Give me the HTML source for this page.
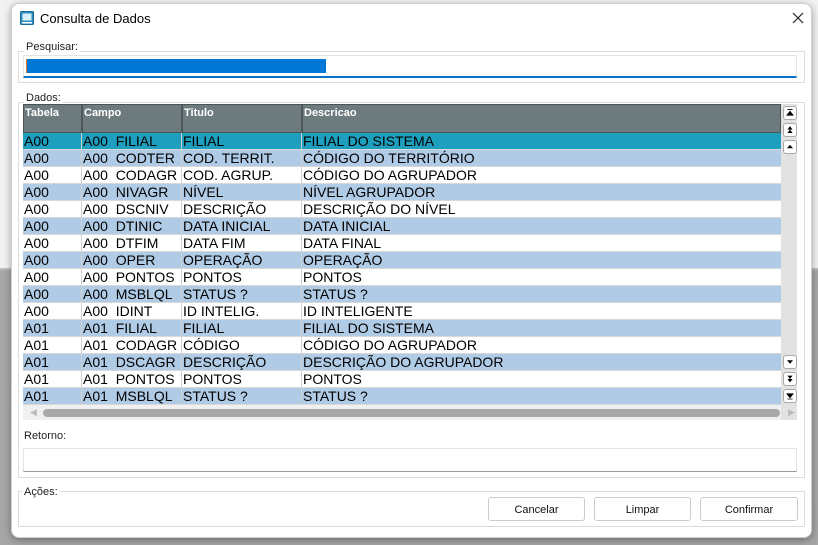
<!DOCTYPE html>
<html><head><meta charset="utf-8"><style>
*{box-sizing:border-box;margin:0;padding:0}
body{width:818px;height:545px;overflow:hidden;position:relative;font-family:"Liberation Sans",Arial,sans-serif;background:linear-gradient(#f2f2f2 0,#f2f2f2 268px,#c8c8c8 268px,#a8a8a8 271px,#a6a6a6 545px)}
.win{position:absolute;left:11px;top:3px;width:801px;height:535px;background:#fff;border:1px solid #cfcfcf;border-radius:8px;box-shadow:0 2px 8px rgba(0,0,0,.35)}
.abs{position:absolute}
.fs{position:absolute;border:1px solid #dcdcdc}
.lbl{position:absolute;font-size:11px;color:#222;background:#fff;padding:0 2px}
.grid{position:absolute;left:23px;top:104px;width:758px}
.row{height:17px;display:flex;font-size:14px;line-height:17px;padding-top:1px;color:#000;border-bottom:1px solid #d8d8d8;white-space:pre}
.row div{overflow:hidden;border-right:1px solid #d0d0d0;padding-left:1px;margin-top:-1px}
.c1{width:59px}.c2{width:100px}.c3{width:120px}.c4{flex:1;border-right:none!important}
.hdr{height:29px;background:#6e7b7e;display:flex;color:#fff;font-weight:bold;font-size:11px;line-height:15px;border:1px solid #4a5456}
.hdr div{border-right:2px solid #4e585a;padding-left:1px;padding-top:1px}
.b{background:#b0cbe6}.w{background:#fff}.s{background:#1e9fbe}
.sb{position:absolute;left:783px;width:14px;height:14px;border:1px solid #aaa;border-radius:3px;background:#fff}
.btn{position:absolute;top:497px;height:24px;border:1px solid #ccc;border-radius:3px;background:#fff;font-size:11px;text-align:center;line-height:24px;color:#111}
</style></head><body>
<div class="win"></div>
<svg class="abs" style="left:20px;top:11px" width="14" height="14"><rect x="0.5" y="0.5" width="13" height="13" rx="1" fill="#2b8dc0" stroke="#1a6a94"/><rect x="2.5" y="2.5" width="9" height="7" fill="#d8eef8"/><rect x="2" y="11" width="10" height="1.5" fill="#fff"/></svg>
<div class="abs" style="left:40px;top:11px;font-size:13px;color:#000">Consulta de Dados</div>
<svg class="abs" style="left:792px;top:12px" width="12" height="12"><path d="M1 1L11 11M11 1L1 11" stroke="#222" stroke-width="1.2"/></svg>

<div class="fs" style="left:18px;top:51px;width:787px;height:32px"></div>
<div class="lbl" style="left:24px;top:41px">Pesquisar:</div>
<div class="abs" style="left:23px;top:55px;width:774px;height:23px;border:1px solid #e4e4e4;border-bottom:2px solid #0a73c8"></div>
<div class="abs" style="left:26px;top:59px;width:300px;height:14px;background:#0078d7;border-left:1px solid #e0762a"></div>

<div class="fs" style="left:18px;top:102px;width:787px;height:376px"></div>
<div class="lbl" style="left:24px;top:92px">Dados:</div>
<div class="abs" style="left:781px;top:104px;width:16px;height:316px;background:#e2e2e2"></div>
<div class="grid">
<div class="hdr"><div class="c1">Tabela</div><div class="c2">Campo</div><div class="c3">Titulo</div><div class="c4">Descricao</div></div>
<div class="row s"><div class="c1">A00</div><div class="c2">A00  FILIAL</div><div class="c3">FILIAL</div><div class="c4">FILIAL DO SISTEMA</div></div>
<div class="row b"><div class="c1">A00</div><div class="c2">A00  CODTER</div><div class="c3">COD. TERRIT.</div><div class="c4">CÓDIGO DO TERRITÓRIO</div></div>
<div class="row w"><div class="c1">A00</div><div class="c2">A00  CODAGR</div><div class="c3">COD. AGRUP.</div><div class="c4">CÓDIGO DO AGRUPADOR</div></div>
<div class="row b"><div class="c1">A00</div><div class="c2">A00  NIVAGR</div><div class="c3">NÍVEL</div><div class="c4">NÍVEL AGRUPADOR</div></div>
<div class="row w"><div class="c1">A00</div><div class="c2">A00  DSCNIV</div><div class="c3">DESCRIÇÃO</div><div class="c4">DESCRIÇÃO DO NÍVEL</div></div>
<div class="row b"><div class="c1">A00</div><div class="c2">A00  DTINIC</div><div class="c3">DATA INICIAL</div><div class="c4">DATA INICIAL</div></div>
<div class="row w"><div class="c1">A00</div><div class="c2">A00  DTFIM</div><div class="c3">DATA FIM</div><div class="c4">DATA FINAL</div></div>
<div class="row b"><div class="c1">A00</div><div class="c2">A00  OPER</div><div class="c3">OPERAÇÃO</div><div class="c4">OPERAÇÃO</div></div>
<div class="row w"><div class="c1">A00</div><div class="c2">A00  PONTOS</div><div class="c3">PONTOS</div><div class="c4">PONTOS</div></div>
<div class="row b"><div class="c1">A00</div><div class="c2">A00  MSBLQL</div><div class="c3">STATUS ?</div><div class="c4">STATUS ?</div></div>
<div class="row w"><div class="c1">A00</div><div class="c2">A00  IDINT</div><div class="c3">ID INTELIG.</div><div class="c4">ID INTELIGENTE</div></div>
<div class="row b"><div class="c1">A01</div><div class="c2">A01  FILIAL</div><div class="c3">FILIAL</div><div class="c4">FILIAL DO SISTEMA</div></div>
<div class="row w"><div class="c1">A01</div><div class="c2">A01  CODAGR</div><div class="c3">CÓDIGO</div><div class="c4">CÓDIGO DO AGRUPADOR</div></div>
<div class="row b"><div class="c1">A01</div><div class="c2">A01  DSCAGR</div><div class="c3">DESCRIÇÃO</div><div class="c4">DESCRIÇÃO DO AGRUPADOR</div></div>
<div class="row w"><div class="c1">A01</div><div class="c2">A01  PONTOS</div><div class="c3">PONTOS</div><div class="c4">PONTOS</div></div>
<div class="row b"><div class="c1">A01</div><div class="c2">A01  MSBLQL</div><div class="c3">STATUS ?</div><div class="c4">STATUS ?</div></div>
</div>
<div class="abs" style="left:23px;top:405px;width:758px;height:15px;background:#f0f0f0"></div>
<div class="abs" style="left:43px;top:409px;width:737px;height:8px;border-radius:4px;background:#a8a8a8"></div>
<div class="abs" style="left:30px;top:407px;font-size:9px;color:#bbb">◀</div>
<div class="abs" style="left:788px;top:407px;font-size:9px;color:#bbb">▶</div>
<svg class="sb" style="top:106px" viewBox="0 0 14 14"><path d="M4 3H10M7 5L3.5 9.5H10.5Z" stroke="#000" fill="#000"/></svg>
<svg class="sb" style="top:123px" viewBox="0 0 14 14"><path d="M7 2.5L4 6.5H10ZM7 6.5L4 10.5H10Z" fill="#000"/></svg>
<svg class="sb" style="top:140px" viewBox="0 0 14 14"><path d="M7 4.5L3.5 8.5H10.5Z" fill="#000"/></svg>
<svg class="sb" style="top:355px" viewBox="0 0 14 14"><path d="M7 9L3.5 5H10.5Z" fill="#000"/></svg>
<svg class="sb" style="top:372px" viewBox="0 0 14 14"><path d="M7 7L4 3H10ZM7 11L4 7H10Z" fill="#000"/></svg>
<svg class="sb" style="top:389px" viewBox="0 0 14 14"><path d="M7 9L3.5 4.5H10.5ZM4 10.5H10" stroke="#000" fill="#000"/></svg>

<div class="abs" style="left:24px;top:430px;font-size:11px;color:#222">Retorno:</div>
<div class="abs" style="left:23px;top:448px;width:774px;height:24px;border:1px solid #e4e4e4;border-bottom:1px solid #999"></div>

<div class="fs" style="left:18px;top:491px;width:787px;height:36px"></div>
<div class="lbl" style="left:22px;top:486px">Ações:</div>
<div class="btn" style="left:488px;width:97px">Cancelar</div>
<div class="btn" style="left:594px;width:97px">Limpar</div>
<div class="btn" style="left:700px;width:98px">Confirmar</div>
</body></html>
